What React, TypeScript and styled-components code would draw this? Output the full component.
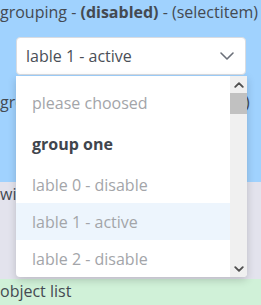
import React, { FC } from "react";
import styled, { createGlobalStyle } from "styled-components";

const GlobalStyle = createGlobalStyle`
  html, body {
    margin: 0;
    padding: 0;
    background: #ffffff;
  }
  body {
    font-family: "Open Sans", "Noto Sans", sans-serif;
    font-size: 16px;
    color: #444a52;
    overflow: hidden;
  }
`;

const Page = styled.div`
  width: 261px;
  height: 305px;
  overflow: hidden;
  display: flex;
  flex-direction: column;
`;

const Section = styled.div<{ $bg: string; $height: number }>`
  background-color: ${(props) => props.$bg};
  height: ${(props) => props.$height}px;
  flex-shrink: 0;
  position: relative;
`;

const Line = styled.div`
  line-height: 24px;
  white-space: nowrap;
`;

const SelectWrap = styled.div`
  position: relative;
  margin: 13px 15px 15px 16px;
`;

const SelectBox = styled.div`
  height: 36px;
  border: 1px solid #d9dce1;
  border-radius: 4px;
  background: #ffffff;
  display: flex;
  align-items: center;
  justify-content: space-between;
  padding: 0 10px 0 9px;
  color: #4a4f57;
`;

const Popup = styled.div`
  position: absolute;
  left: 0;
  right: -1px;
  top: 39px;
  height: 201px;
  background: #ffffff;
  border-radius: 0 0 4px 4px;
  box-shadow: 0 3px 8px rgba(0, 0, 0, 0.18);
  display: flex;
  overflow: hidden;
  z-index: 10;
`;

const Options = styled.div`
  flex: 1;
  padding-top: 8px;
  display: flex;
  flex-direction: column;
`;

const rowHeight = { placeholder: 38, group: 44, item: 36 };

const Option = styled.div<{ $kind: "placeholder" | "group" | "item"; $active?: boolean }>`
  height: ${(props) => rowHeight[props.$kind]}px;
  line-height: ${(props) => rowHeight[props.$kind]}px;
  padding-top: ${(props) => (props.$kind === "item" ? 1 : 0)}px;
  padding-left: 16px;
  white-space: nowrap;
  flex-shrink: 0;
  font-weight: ${(props) => (props.$kind === "group" ? 700 : 400)};
  color: ${(props) => (props.$kind === "group" ? "#40454d" : "#a3a5a9")};
  background: ${(props) => (props.$active ? "#edf5fd" : "transparent")};
`;

const Track = styled.div`
  width: 17px;
  background: #f0f0f0;
  display: flex;
  flex-direction: column;
`;

const ArrowButton = styled.div`
  height: 17px;
  display: flex;
  align-items: center;
  justify-content: center;
`;

const Thumb = styled.div`
  height: 21px;
  background: #c1c1c1;
`;

const Spacer = styled.div`
  flex: 1;
`;

const Chevron: FC<{ up?: boolean; size: number; stroke: string; width: number }> = ({
  up,
  size,
  stroke,
  width,
}) => (
  <svg width={size} height={size} viewBox="0 0 16 16">
    <path
      d={up ? "M2 11 L8 5 L14 11" : "M2 5 L8 11 L14 5"}
      fill="none"
      stroke={stroke}
      strokeWidth={width}
      strokeLinecap="round"
      strokeLinejoin="round"
    />
  </svg>
);

const options = [
  { label: "lable 0 - disable" },
  { label: "lable 1 - active", active: true },
  { label: "lable 2 - disable" },
];

const App: FC = () => {
  return (
    <Page>
      <GlobalStyle />
      <Section $bg="#a0d2fe" $height={182}>
        <Line>
          grouping - <b>(disabled)</b> - (selectitem)
        </Line>
        <SelectWrap>
          <SelectBox>
            <span>lable 1 - active</span>
            <Chevron size={16} stroke="#6b7079" width={1.6} />
          </SelectBox>
          <Popup>
            <Options>
              <Option $kind="placeholder">please choosed</Option>
              <Option $kind="group">group one</Option>
              {options.map((o) => (
                <Option key={o.label} $kind="item" $active={o.active}>
                  {o.label}
                </Option>
              ))}
            </Options>
            <Track>
              <ArrowButton>
                <Chevron up size={10} stroke="#505050" width={3} />
              </ArrowButton>
              <Thumb />
              <Spacer />
              <ArrowButton>
                <Chevron size={10} stroke="#505050" width={3} />
              </ArrowButton>
            </Track>
          </Popup>
        </SelectWrap>
        <Line>grouping - (enabled) - (selectitem)</Line>
      </Section>
      <Section $bg="#e3e3ed" $height={97}>
        <Line>with disabled item</Line>
      </Section>
      <Section $bg="#d0f1d8" $height={26}>
        <Line>object list</Line>
      </Section>
    </Page>
  );
};

export default App;
